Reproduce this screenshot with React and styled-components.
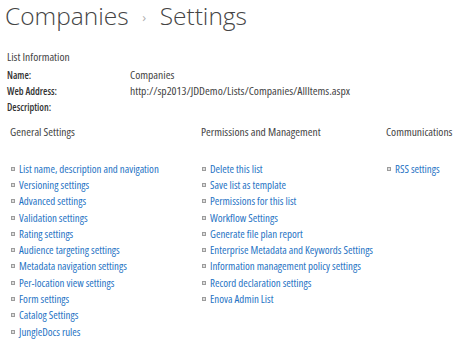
import React from "react";
import styled, { createGlobalStyle } from "styled-components";

const Global = createGlobalStyle`
  html, body { margin: 0; padding: 0; background: #fff; }
  body {
    font-family: "Open Sans", "Noto Sans", sans-serif;
    font-stretch: 87.5%;
    color: #444;
  }
`;

const Page = styled.div`
  width: 474px;
  height: 358px;
  overflow: hidden;
  box-sizing: border-box;
`;

const Title = styled.h1`
  margin: 0;
  padding-left: 5px;
  height: 32px;
  line-height: 32px;
  display: flex;
  align-items: center;
  font-family: "Open Sans", sans-serif;
  font-stretch: 100%;
  font-weight: 300;
  font-size: 24.5px;
  color: #444;
`;

const Sep = styled.span`
  width: 31px;
  text-align: center;
  font-size: 13px;
  line-height: 13px;
  font-weight: 400;
  color: #b0b0b0;
  padding-top: 3px;
`;

const InfoSection = styled.section`
  margin-top: 17px;
  padding-left: 7px;
`;

const SectionLabel = styled.div`
  font-size: 11.5px;
  line-height: 16px;
  color: #444;
`;

const InfoGrid = styled.div`
  display: grid;
  grid-template-columns: 123px 1fr;
  margin-top: 2px;
  font-size: 11.6px;
  line-height: 16px;
`;

const InfoKey = styled.div`
  font-weight: 600;
  font-size: 10px;
  color: #333;
`;

const InfoVal = styled.div`
  color: #444;
`;

const Columns = styled.div`
  display: grid;
  grid-template-columns: 191px 185px 1fr;
  margin-top: 9px;
  padding-left: 10px;
`;

const Column = styled.div``;

const ColHead = styled.div`
  font-size: 11.5px;
  line-height: 16px;
  color: #444;
  margin-bottom: 20px;
  white-space: nowrap;
`;

const LinkList = styled.ul`
  list-style: none;
  margin: 0;
  padding: 0;
`;

const Item = styled.li`
  display: flex;
  align-items: center;
  height: 16.3px;
  font-size: 10.9px;
  color: #1f73c4;
  white-space: nowrap;
`;

const Bullet = styled.span`
  width: 2px;
  height: 2px;
  border: 1px solid #9c9c9c;
  background: #dedede;
  margin: 1px 4px 0 1px;
  flex: none;
`;

const cols = [
  {
    head: "General Settings",
    items: [
      "List name, description and navigation",
      "Versioning settings",
      "Advanced settings",
      "Validation settings",
      "Rating settings",
      "Audience targeting settings",
      "Metadata navigation settings",
      "Per-location view settings",
      "Form settings",
      "Catalog Settings",
      "JungleDocs rules",
    ],
  },
  {
    head: "Permissions and Management",
    items: [
      "Delete this list",
      "Save list as template",
      "Permissions for this list",
      "Workflow Settings",
      "Generate file plan report",
      "Enterprise Metadata and Keywords Settings",
      "Information management policy settings",
      "Record declaration settings",
      "Enova Admin List",
    ],
  },
  { head: "Communications", items: ["RSS settings"] },
];

export default function App() {
  return (
    <>
      <Global />
      <Page>
        <Title>
          <span>Companies</span>
          <Sep>›</Sep>
          <span>Settings</span>
        </Title>
        <InfoSection>
          <SectionLabel>List Information</SectionLabel>
          <InfoGrid>
            <InfoKey>Name:</InfoKey>
            <InfoVal>Companies</InfoVal>
            <InfoKey>Web Address:</InfoKey>
            <InfoVal>http://sp2013/JDDemo/Lists/Companies/AllItems.aspx</InfoVal>
            <InfoKey>Description:</InfoKey>
            <InfoVal></InfoVal>
          </InfoGrid>
        </InfoSection>
        <Columns>
          {cols.map((c) => (
            <Column key={c.head}>
              <ColHead>{c.head}</ColHead>
              <LinkList>
                {c.items.map((t) => (
                  <Item key={t}>
                    <Bullet />
                    {t}
                  </Item>
                ))}
              </LinkList>
            </Column>
          ))}
        </Columns>
      </Page>
    </>
  );
}
